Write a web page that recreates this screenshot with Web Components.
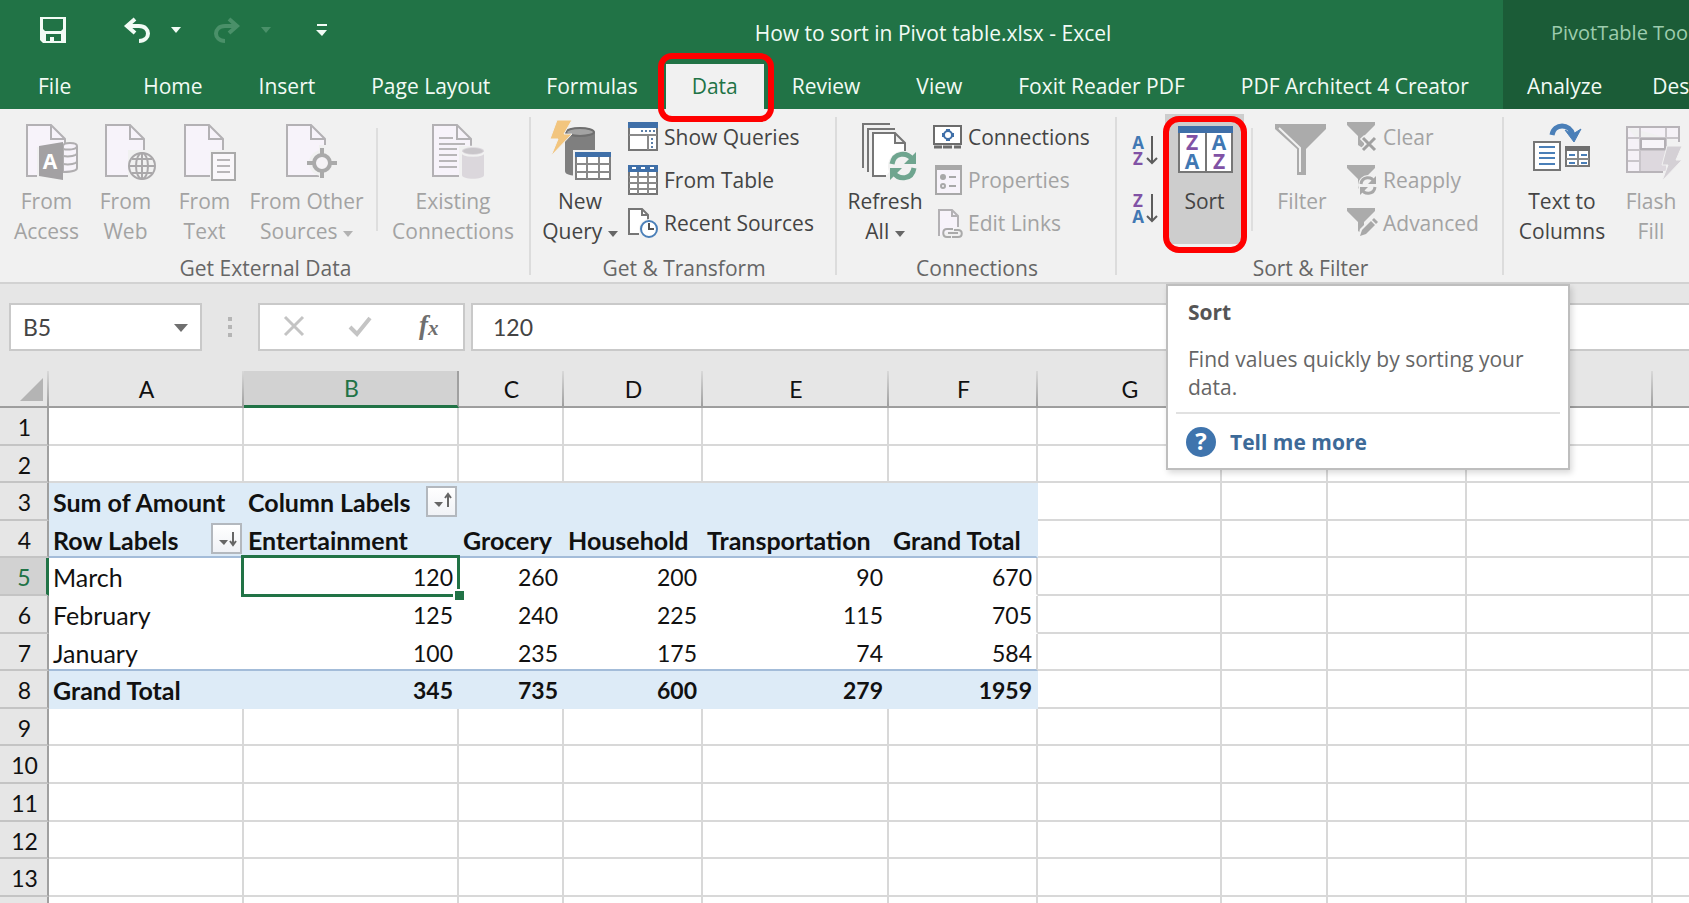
<!doctype html>
<html lang="en">
<head>
    <title>How to sort in Pivot table.xlsx - Excel</title>
    <meta charset="utf-8">
    <style>
        html, body {
            height: 100%;
            margin: 0;
            overflow: hidden;
        }
        body {
            --ui: "Open Sans", "Noto Sans", sans-serif;
            --cell: Lato, "Open Sans", sans-serif;
            --green: #217346;
            font: 21px/30px var(--ui);
            color: #444;
            background: #fff;
        }
    </style>
</head>
<body>
    <template id="header-tpl">
        <style>
            :host {
                display: grid;
                grid-template-columns: minmax(0, 1fr) 186px;
                color: #f2fbf5;
                background: var(--green);
            }
            .bar {
                display: flex;
                align-items: center;
                box-sizing: border-box;
                height: 64px;
                padding-top: 2px;
            }
            .title {
                flex: 1;
                text-align: center;
            }
            .tabs {
                display: flex;
                height: 45px;
                padding-left: 10px;
            }
            .context {
                overflow: hidden;
                white-space: nowrap;
                background: #1b5c37;
            }
            .context .bar {
                padding-left: 48px;
                font-size: 20px;
                color: #9dccae;
            }
            .context .tabs {
                padding-left: 0;
            }
        </style>
        <div>
            <div class="bar">
                <slot name="tools"></slot>
                <div class="title"><slot name="title"></slot></div>
            </div>
            <nav class="tabs"><slot></slot></nav>
        </div>
        <div class="context">
            <div class="bar"><slot name="context-title"></slot></div>
            <nav class="tabs"><slot name="context-tab"></slot></nav>
        </div>
    </template>

    <template id="quick-tpl">
        <style>
            :host {
                display: flex;
                align-items: center;
                align-self: flex-start;
                gap: 32px;
                box-sizing: border-box;
                width: 363px;
                height: 56px;
                padding-left: 39px;
            }
            button {
                display: flex;
                align-items: center;
                gap: 20px;
                padding: 0;
                border: 0;
                background: none;
                color: inherit;
            }
            button:disabled {
                color: #4a9069;
            }
            .save {
                margin-right: 24px;
            }
            .more {
                margin-left: 13px;
            }
        </style>
        <button class="save" aria-label="Save"><x-icon name="save"></x-icon></button>
        <button aria-label="Undo"><x-icon name="undo"></x-icon><x-icon name="caret"></x-icon></button>
        <button aria-label="Redo" disabled><x-icon name="redo"></x-icon><x-icon name="caret"></x-icon></button>
        <button class="more" aria-label="Customize toolbar"><x-icon name="more"></x-icon></button>
    </template>

    <template id="tab-tpl">
        <style>
            :host {
                position: relative;
                display: block;
            }
            a {
                display: block;
                padding: 0 28px;
                line-height: 45px;
                height: 45px;
                white-space: nowrap;
                color: inherit;
                text-decoration: none;
            }
            :host([first]) a {
                padding-right: 44px;
            }
            :host([slot]) a {
                padding: 0 26px 0 24px;
            }
            :host([active]) a {
                padding: 0 26px;
                color: var(--green);
                background: #f1f1f1;
            }
            .mark {
                display: none;
                position: absolute;
                z-index: 2;
                inset: -11px -10px -13px -8px;
                border: 6px solid #f00;
                border-radius: 14px;
                pointer-events: none;
            }
            :host([active]) .mark {
                display: block;
            }
        </style>
        <a href="#"><slot></slot></a>
        <span class="mark"></span>
    </template>

    <template id="ribbon-tpl">
        <style>
            :host {
                display: flex;
                height: 173px;
                background: #f1f1f1;
                border-bottom: 2px solid #d2d2d2;
            }
        </style>
        <slot></slot>
    </template>

    <template id="group-tpl">
        <style>
            :host {
                position: relative;
                flex: none;
                display: flex;
                flex-direction: column;
                box-sizing: border-box;
                padding: 0 7px;
            }
            :host::after {
                content: "";
                position: absolute;
                top: 8px;
                right: 0;
                bottom: 7px;
                width: 2px;
                background: #dcdcdc;
            }
            :host([last]) {
                flex: 1;
            }
            :host([last])::after {
                display: none;
            }
            .tools {
                display: flex;
                height: 146px;
            }
            .label {
                line-height: 26px;
                text-align: center;
                color: #666;
            }
        </style>
        <div class="tools"><slot></slot></div>
        <div class="label"><slot name="label"></slot></div>
    </template>

    <template id="big-tpl">
        <style>
            :host {
                position: relative;
                display: block;
                flex: none;
                padding-top: 5px;
            }
            button {
                display: flex;
                flex-direction: column;
                align-items: center;
                gap: 4px;
                width: 100%;
                height: 130px;
                padding: 8px 0 0;
                border: 0;
                background: none;
                font: inherit;
                color: #444;
                white-space: nowrap;
            }
            button:disabled {
                color: #a3a3a3;
            }
            :host([pressed]) button {
                background: #cdcdcd;
            }
            .mark {
                display: none;
                position: absolute;
                z-index: 2;
                inset: 7px -3px 2px -2px;
                border: 6px solid #f00;
                border-radius: 16px;
                pointer-events: none;
            }
            :host([pressed]) .mark {
                display: block;
            }
        </style>
        <button><x-icon></x-icon><span><slot></slot></span></button>
        <span class="mark"></span>
        <slot name="tip"></slot>
    </template>

    <template id="small-tpl">
        <style>
            :host {
                display: block;
            }
            button {
                display: flex;
                align-items: center;
                gap: 6px;
                height: 43px;
                padding: 0;
                border: 0;
                background: none;
                font: inherit;
                color: #444;
                white-space: nowrap;
            }
            button:disabled {
                color: #a3a3a3;
            }
            :host([label]) button {
                gap: 0;
            }
        </style>
        <button><x-icon></x-icon><span><slot></slot></span></button>
    </template>

    <template id="stack-tpl">
        <style>
            :host {
                display: flex;
                flex-direction: column;
                padding-top: 6px;
            }
            :host([narrow]) {
                align-items: center;
                width: 41px;
                gap: 15px;
                padding-top: 20px;
            }
        </style>
        <slot></slot>
    </template>

    <template id="divider-tpl">
        <style>
            :host {
                display: block;
                flex: none;
                width: 2px;
                height: 103px;
                margin: 19px 7px 0;
                background: #dedede;
            }
        </style>
    </template>

    <template id="tip-tpl">
        <style>
            :host {
                position: absolute;
                z-index: 3;
                top: 175px;
                left: 1px;
                box-sizing: border-box;
                width: 404px;
                padding: 12px 8px 11px;
                background: #fff;
                border: 2px solid #bebebe;
                box-shadow: 2px 3px 6px rgba(0, 0, 0, 0.15);
                line-height: 28px;
                color: #666;
            }
            h2, p {
                margin: 0 12px;
                font-size: inherit;
            }
            h2 {
                margin-bottom: 19px;
                color: #555;
            }
            a {
                display: flex;
                align-items: center;
                gap: 14px;
                margin-top: 11px;
                padding: 13px 10px 0;
                border-top: 2px solid #e1e1e1;
                font-weight: bold;
                color: #3d6a98;
                text-decoration: none;
            }
        </style>
        <h2><slot name="heading"></slot></h2>
        <p><slot></slot></p>
        <a href="#"><x-icon name="help"></x-icon><slot name="link"></slot></a>
    </template>

    <template id="formula-tpl">
        <style>
            :host {
                display: flex;
                height: 48px;
                padding: 19px 0 20px 9px;
                background: #e6e6e6;
                color: #444;
            }
            .box {
                display: flex;
                align-items: center;
                box-sizing: border-box;
                height: 48px;
                border: 2px solid #c9c9c9;
                background: #fff;
            }
            .name {
                width: 193px;
                padding-right: 12px;
            }
            .grip {
                display: flex;
                align-items: center;
                justify-content: center;
                width: 56px;
            }
            .keys {
                width: 207px;
                justify-content: space-around;
                padding: 0 3px 0 1px;
            }
            .value {
                flex: 1;
                margin-left: 6px;
                border-right: 0;
            }
            input {
                flex: 1;
                min-width: 0;
                padding: 0 12px;
                border: 0;
                outline: 0;
                background: none;
                font: 23px var(--cell);
                color: inherit;
            }
            .value input {
                padding: 0 20px;
            }
            button {
                padding: 0;
                border: 0;
                background: none;
                color: #6f6f6f;
            }
            button:disabled {
                color: #c4c4c4;
            }
        </style>
        <div class="box name">
            <input type="text" aria-label="Name box" value="B5">
            <button aria-label="Open name list"><x-icon name="drop"></x-icon></button>
        </div>
        <div class="grip"><x-icon name="grip"></x-icon></div>
        <div class="box keys">
            <button aria-label="Cancel" disabled><x-icon name="cancel"></x-icon></button>
            <button aria-label="Enter" disabled><x-icon name="enter"></x-icon></button>
            <button aria-label="Insert function"><x-icon name="fx"></x-icon></button>
        </div>
        <div class="box value">
            <input type="text" aria-label="Formula bar" value="120">
        </div>
    </template>

    <template id="sheet-tpl">
        <style>
            :host {
                display: block;
                font: 23px/30px var(--cell);
                color: #111;
            }
            table {
                width: 100%;
                table-layout: fixed;
                border-spacing: 0;
            }
            tr {
                height: 38px;
            }
            tbody tr:nth-child(5n + 2), tbody tr:nth-child(5n + 4), thead tr {
                height: 37px;
            }
            th, td {
                box-sizing: border-box;
                height: inherit;
                padding: 2px 4px 0;
                border: 0 solid #d8d8d8;
                border-width: 0 2px 2px 0;
                font-weight: normal;
                white-space: nowrap;
            }
            td {
                font-size: 25px;
            }
            thead th {
                padding: 0 0 0 2px;
                background: #e6e6e6;
                border-color: #a0a0a0;
                border-image: linear-gradient(#dcdcdc, #9c9c9c) 2;
            }
            tbody th {
                padding: 2px 0 0 2px;
                background: #e6e6e6;
                border-color: #c4c4c4;
                border-right-color: #a0a0a0;
            }
            thead th.on {
                color: var(--green);
                background: #d2d2d2;
                border-image: none;
                border-bottom: 3px solid var(--green);
                border-right-color: #a0a0a0;
            }
            tbody th.on {
                color: var(--green);
                background: #d2d2d2;
                border-right: 3px solid var(--green);
            }
            tr > :last-child {
                border-right: 0;
            }
            thead th.corner {
                padding: 0 4px 0 0;
                line-height: 0;
                text-align: right;
                vertical-align: middle;
            }
            .num {
                font-size: 23px;
                text-align: right;
            }
            .bold {
                font-weight: bold;
            }
            .plain, .band {
                padding-right: 6px;
                border-right: 0;
                border-bottom-color: #fff;
            }
            .band {
                background: #ddebf7;
                border-color: #ddebf7;
            }
            .edge {
                padding-right: 4px;
                border-right: 2px solid #d8d8d8;
            }
            .band.edge {
                border-right-color: #ddebf7;
            }
            .line {
                border-bottom-color: #a3bcd9;
            }
            .box {
                display: flex;
                align-items: center;
                justify-content: space-between;
            }
            .box button {
                flex: none;
                width: 31px;
                height: 31px;
                margin: -2px -4px 0 0;
                padding: 0;
                border: 2px solid #b3b8be;
                background: linear-gradient(#fff, #f0f2f6);
                line-height: 0;
            }
            .picked {
                position: relative;
            }
            .picked::before {
                content: "";
                position: absolute;
                inset: -3px -1px -3px -3px;
                border: 3px solid var(--green);
            }
            .picked::after {
                content: "";
                position: absolute;
                right: -5px;
                bottom: -6px;
                width: 9px;
                height: 9px;
                border: 2px solid #fff;
                border-width: 2px 0 0 2px;
                background: var(--green);
            }
        </style>
        <table>
            <colgroup></colgroup>
            <thead></thead>
            <tbody></tbody>
        </table>
    </template>

    <excel-header>
        <quick-access slot="tools"></quick-access>
        <span slot="title">How to sort in Pivot table.xlsx - Excel</span>
        <ribbon-tab first>File</ribbon-tab>
        <ribbon-tab>Home</ribbon-tab>
        <ribbon-tab>Insert</ribbon-tab>
        <ribbon-tab>Page Layout</ribbon-tab>
        <ribbon-tab>Formulas</ribbon-tab>
        <ribbon-tab active>Data</ribbon-tab>
        <ribbon-tab>Review</ribbon-tab>
        <ribbon-tab>View</ribbon-tab>
        <ribbon-tab>Foxit Reader PDF</ribbon-tab>
        <ribbon-tab>PDF Architect 4 Creator</ribbon-tab>
        <span slot="context-title">PivotTable Tools</span>
        <ribbon-tab slot="context-tab">Analyze</ribbon-tab>
        <ribbon-tab slot="context-tab">Design</ribbon-tab>
    </excel-header>

    <excel-ribbon>
        <ribbon-group style="width: 531px">
            <big-button icon="access" style="width: 79px" disabled>From<br>Access</big-button>
            <big-button icon="web" style="width: 79px" disabled>From<br>Web</big-button>
            <big-button icon="text" style="width: 79px" disabled>From<br>Text</big-button>
            <big-button icon="other" style="width: 125px" disabled>From Other<br>Sources <x-icon name="arrow"></x-icon></big-button>
            <tool-divider></tool-divider>
            <big-button icon="existing" style="width: 136px" disabled>Existing<br>Connections</big-button>
            <span slot="label">Get External Data</span>
        </ribbon-group>
        <ribbon-group style="width: 306px">
            <big-button icon="query" style="width: 84px">New<br>Query <x-icon name="arrow"></x-icon></big-button>
            <tool-stack style="margin-left: 6px">
                <small-button icon="show">Show Queries</small-button>
                <small-button icon="table">From Table</small-button>
                <small-button icon="recent">Recent Sources</small-button>
            </tool-stack>
            <span slot="label">Get &amp; Transform</span>
        </ribbon-group>
        <ribbon-group style="width: 280px">
            <big-button icon="refresh" style="width: 82px">Refresh<br>All <x-icon name="arrow"></x-icon></big-button>
            <tool-stack style="margin-left: 6px">
                <small-button icon="links">Connections</small-button>
                <small-button icon="props" disabled>Properties</small-button>
                <small-button icon="edit" disabled>Edit Links</small-button>
            </tool-stack>
            <span slot="label">Connections</span>
        </ribbon-group>
        <ribbon-group style="width: 387px">
            <tool-stack narrow>
                <small-button icon="az" label="Sort A to Z"></small-button>
                <small-button icon="za" label="Sort Z to A"></small-button>
            </tool-stack>
            <big-button icon="sort" style="width: 79px" pressed>Sort
                <sort-tip slot="tip">
                    <span slot="heading">Sort</span>
                    Find values quickly by sorting your data.
                    <span slot="link">Tell me more</span>
                </sort-tip>
            </big-button>
            <tool-divider></tool-divider>
            <big-button icon="filter" style="width: 84px" disabled>Filter</big-button>
            <tool-stack style="margin-left: 3px">
                <small-button icon="clear" disabled>Clear</small-button>
                <small-button icon="reapply" disabled>Reapply</small-button>
                <small-button icon="advanced" disabled>Advanced</small-button>
            </tool-stack>
            <span slot="label">Sort &amp; Filter</span>
        </ribbon-group>
        <ribbon-group last>
            <big-button icon="columns" style="width: 102px">Text to<br>Columns</big-button>
            <big-button icon="flash" style="width: 76px" disabled>Flash<br>Fill</big-button>
        </ribbon-group>
    </excel-ribbon>

    <formula-bar></formula-bar>
    <pivot-sheet></pivot-sheet>

<script>
    // page outline with a folded corner, shared by the document icons
    const page = (end, side) => `
        <path d="M${end} 54H10V3h24l14 14v${side}H${end}z" fill="#f7f3fa"/>
        <path d="M${end} 54H10V3h24l14 14v${side}M34 3v14h14" fill="none" stroke="#b3b1b4" stroke-width="2"/>`;

    const funnel = '<path d="M0 0h28v3L17 14v13l-6-4V14L0 3z" fill="#ababab"/>';

    const letters = 'font-family="Open Sans, sans-serif" font-weight="bold"';

    // name: [width, height, markup]
    const icons = {
        save: [28, 28, '<path d="M1 1h26v26H4l-3-3zM4 3v10l2 2h16l2-2V3zM7 18v7h4v-4h4v4h7v-7z" fill="currentColor" fill-rule="evenodd"/>'],
        undo: [28, 26, '<path d="M12 2L4 9l8 7M4 9h12c12 0 12 15 0 15" fill="none" stroke="currentColor" stroke-width="4"/>'],
        redo: [28, 26, '<path d="M16 2l8 7-8 7M24 9H12C0 9 0 24 12 24" fill="none" stroke="currentColor" stroke-width="4"/>'],
        caret: [10, 6, '<path d="M0 0h10L5 6z" fill="currentColor"/>'],
        more: [11, 14, '<path d="M1 1h10v2H1zM0 7h11l-5 6z" fill="currentColor"/>'],
        arrow: [10, 10, '<path d="M0 2h10L5 8z" fill="currentColor" opacity="0.8"/>'],
        drop: [14, 8, '<path d="M0 0h14L7 8z" fill="currentColor"/>'],
        grip: [4, 20, '<path d="M0 0h4v4H0zM0 8h4v4H0zM0 16h4v4H0z" fill="#b5b5b5"/>'],
        cancel: [22, 20, '<path d="M2 1l18 18M20 1L2 19" stroke="currentColor" stroke-width="3" fill="none"/>'],
        enter: [24, 20, '<path d="M2 11l7 7L22 2" stroke="currentColor" stroke-width="4" fill="none"/>'],
        fx: [24, 28, '<text x="4" y="22" font-family="Liberation Serif, serif" font-style="italic" font-weight="bold" font-size="27" fill="currentColor">f</text><text x="13" y="23" font-family="Liberation Serif, serif" font-style="italic" font-weight="bold" font-size="21" fill="currentColor">x</text>'],
        help: [30, 30, `<circle cx="15" cy="15" r="15" fill="#3f74ad"/><text x="15" y="23" text-anchor="middle" ${letters} font-size="24" fill="#fff">?</text>`],
        access: [60, 60, page(20, 8) + `
            <path d="M46 24c0-4 14-4 14 0v22c0 4-14 4-14 4z" fill="#f7f3fa" stroke="#b0aeb0" stroke-width="2"/>
            <path d="M46 27c4 1 14 1 14-3M46 34c6 1 14 0 14-3M46 42c6 1 14 0 14-3" fill="none" stroke="#b0aeb0" stroke-width="2"/>
            <path d="M22 24l24-4v38l-24-4z" fill="#a3a1a3"/>
            <text x="33" y="47" text-anchor="middle" ${letters} font-size="21" fill="#fff">A</text>`],
        web: [60, 60, page(32, 11) + `
            <g fill="none" stroke="#aaa8aa" stroke-width="2"><circle cx="46" cy="44" r="13" fill="#f1f1f1"/><ellipse cx="46" cy="44" rx="6" ry="13"/><path d="M46 31v26M33 44h26M36 37h20M36 51h20"/></g>`],
        text: [60, 60, page(35, 11) + `
            <path d="M37 31h23v27H37z" fill="#f9f7fa" stroke="#aaa" stroke-width="2"/><path d="M42 38h13M42 44h13M42 50h13" stroke="#b8b6b8" stroke-width="2"/>`],
        other: [60, 60, page(42, 6) + `
            <circle cx="45" cy="41" r="13" fill="#f1f1f1"/><path d="M45 26v30M30 41h30" stroke="#aaa" stroke-width="4"/>
            <circle cx="45" cy="41" r="8" fill="#f5f3f6" stroke="#aaa" stroke-width="4"/>`],
        existing: [60, 60, page(36, 7) + `
            <path d="M16 16h14M16 22h26M16 27h18M16 33h18M16 39h18M16 45h18" stroke="#b8b6b8" stroke-width="2"/>
            <path d="M37 29c0-7 24-7 24 0v24c0 7-24 7-24 0z" fill="#f1f1f1"/>
            <path d="M39 29c0-5 22-5 22 0v24c0 5-22 5-22 0z" fill="#dbd7dc"/><ellipse cx="50" cy="29" rx="10" ry="3" fill="#c9c6ca"/>
            <path d="M39 30c0 5 22 5 22 0" fill="none" stroke="#f1f1f1" stroke-width="2"/>`],
        query: [60, 60, `
            <path d="M15 11c0-7 30-7 30 0v17H25v26c-6-1-10-2-10-5z" fill="#7f7f7f"/>
            <ellipse cx="30" cy="10" rx="14" ry="4" fill="#a3a3a3" stroke="#6f6f6f" stroke-width="2"/>
            <path d="M7-2h15l-8 14h8L1 34l7-17H0z" fill="#f2c57e" stroke="#f1f1f1" stroke-width="1"/>
            <path d="M23 28h38v32H23z" fill="#f1f1f1"/><path d="M26 31h34v26H26z" fill="#fff" stroke="#7f7f7f" stroke-width="2"/>
            <path d="M25 30h36v5H25z" fill="#3f6fa8"/><path d="M37 35v22M49 35v22M26 42h34M26 50h34" stroke="#8a8a8a" stroke-width="2"/>`],
        show: [30, 30, `
            <path d="M1 2h28v26H1z" fill="#fff" stroke="#767676" stroke-width="2"/><path d="M0 0h30v6H0z" fill="#3f6fa8"/>
            <path d="M1 13h28M20 13v15" stroke="#8a8a8a" stroke-width="2"/><path d="M13 9h14M23 17h4M23 21h4M23 25h4" stroke="#5c7fa8" stroke-width="2" stroke-dasharray="2 2"/>`],
        table: [30, 30, `
            <path d="M1 1h28v28H1z" fill="#fff" stroke="#767676" stroke-width="2"/><path d="M0 0h30v7H0z" fill="#3f6fa8"/>
            <path d="M4 2h4v2H4zM13 2h4v2h-4zM22 2h4v2h-4z" fill="#fff"/><path d="M10 7v22M20 7v22M1 12h28M1 18h28M1 24h28" stroke="#8a8a8a" stroke-width="2"/>`],
        recent: [30, 30, `
            <path d="M11 26H1V1h13l6 6v7" fill="#fff" stroke="#767676" stroke-width="2"/><path d="M14 1v6h6" fill="none" stroke="#767676" stroke-width="2"/>
            <circle cx="21" cy="21" r="10" fill="#f1f1f1"/><circle cx="21" cy="21" r="8" fill="#fff" stroke="#4a7fb8" stroke-width="2"/><path d="M21 15v6h5" fill="none" stroke="#555" stroke-width="2"/>`],
        refresh: [60, 60, `
            <path d="M8 46V2h27M13 50V7h27" fill="none" stroke="#767676" stroke-width="2"/>
            <path d="M31 54H18V11h22l10 10v8M40 11v10h10" fill="#fff" stroke="#767676" stroke-width="2"/>
            <circle cx="48" cy="44" r="15" fill="#f1f1f1"/>
            <path d="M37 42c2-12 15-12 20-5M59 46c-2 12-15 12-20 5" fill="none" stroke="#6fa58f" stroke-width="5"/>
            <path d="M61 30v12H49zM35 58V46h12z" fill="#6fa58f"/>`],
        links: [30, 30, `
            <path d="M2 4h27v18H2z" fill="#fff" stroke="#6c6c6c" stroke-width="2"/><path d="M2 25h8M11 25h9M22 25h7" stroke="#6c6c6c" stroke-width="3"/>
            <path d="M16 7v12M10 13h12" stroke="#3f6fa8" stroke-width="4"/><circle cx="16" cy="13" r="4" fill="#fff" stroke="#3f6fa8" stroke-width="2"/>`],
        props: [30, 30, `
            <path d="M4 1h25v28H4z" fill="#f7f3fa" stroke="#a8a8a8" stroke-width="2"/><path d="M3 0h27v5H3z" fill="#a8a8a8"/>
            <circle cx="11" cy="12" r="3" fill="#a8a8a8"/><circle cx="11" cy="21" r="2" fill="none" stroke="#a8a8a8" stroke-width="2"/><path d="M17 12h7M17 21h7" stroke="#a8a8a8" stroke-width="2"/>`],
        edit: [30, 30, `
            <path d="M7 28V2h13l6 6v11" fill="#f7f3fa" stroke="#b3b1b4" stroke-width="2"/><path d="M20 2v6h6" fill="none" stroke="#b3b1b4" stroke-width="2"/>
            <path d="M21 21h-6c-5 0-5 8 0 8h4M20 29h6c5 0 5-7 0-7h-4M16 25h10" fill="none" stroke="#aaa" stroke-width="2"/>`],
        az: [26, 30, `<text x="6" y="13" text-anchor="middle" ${letters} font-size="17" fill="#4178b3">A</text><text x="6" y="29" text-anchor="middle" ${letters} font-size="17" fill="#8152a5">Z</text><path d="M20 0v27M15 22l5 5 5-5" fill="none" stroke="#5c5c5c" stroke-width="2"/>`],
        za: [26, 30, `<text x="6" y="13" text-anchor="middle" ${letters} font-size="17" fill="#8152a5">Z</text><text x="6" y="29" text-anchor="middle" ${letters} font-size="17" fill="#4178b3">A</text><path d="M20 0v27M15 22l5 5 5-5" fill="none" stroke="#5c5c5c" stroke-width="2"/>`],
        sort: [60, 60, `
            <path d="M4 5h53v45H4z" fill="#fff" stroke="#767676" stroke-width="2"/><path d="M3 4h55v7H3z" fill="#3f6fa8"/><path d="M31 11v39" stroke="#767676" stroke-width="2"/>
            <g text-anchor="middle" ${letters} font-size="21"><text x="17" y="28" fill="#8152a5">Z</text><text x="17" y="47" fill="#4178b3">A</text><text x="44" y="28" fill="#4178b3">A</text><text x="44" y="47" fill="#8152a5">Z</text></g>`],
        filter: [60, 60, '<path d="M3 2h51v5L34 27v26h-9V27L3 7z" fill="#ababab"/><path d="M7 6l21 20v24" fill="none" stroke="#f1f1f1" stroke-width="2"/>'],
        clear: [30, 30, funnel + '<path d="M15 15l14 14M29 15L15 29" stroke="#f1f1f1" stroke-width="6"/><path d="M16 16l12 12M28 16L16 28" stroke="#a0a0a0" stroke-width="3"/>'],
        reapply: [30, 30, funnel + '<circle cx="21" cy="20" r="10" fill="#f1f1f1"/><path d="M14 19c1-8 11-8 13-2M28 22c-1 8-11 8-13 2" fill="none" stroke="#a8a8a8" stroke-width="3"/><path d="M29 11v8h-8zM13 30v-8h8z" fill="#a8a8a8"/>'],
        advanced: [30, 30, funnel + '<path d="M11 30l2-9L25 9l7 7-12 12z" fill="#f1f1f1"/><path d="M13 28l2-6 9-9 4 4-9 9z" fill="#a8a8a8"/><path d="M25 12l2-2 4 4-2 2z" fill="#a8a8a8"/>'],
        columns: [60, 60, `
            <path d="M2 20h26v28H2z" fill="#fff" stroke="#767676" stroke-width="2"/><path d="M7 25h16M7 31h16M7 36h16M7 42h16" stroke="#4a7fb8" stroke-width="2"/>
            <path d="M34 26h23v18H34z" fill="#fff" stroke="#767676" stroke-width="2"/><path d="M33 24h25v5H33z" fill="#6f6f6f"/>
            <path d="M46 29v15M34 37h23" stroke="#8a8a8a" stroke-width="2"/><path d="M37 33h6M49 33h6M37 41h6M49 41h6" stroke="#4a7fb8" stroke-width="2"/>
            <path d="M20 13C22 1 38 1 41 13" fill="none" stroke="#4a7fb8" stroke-width="5"/><path d="M33 8l8 4 8-5-7 13z" fill="#4a7fb8" stroke="#4a7fb8"/>`],
        flash: [60, 60, `
            <path d="M6 5h52v14M6 5v45h36" fill="#f5f1f7"/>
            <path d="M6 16h52M6 28h44M6 39h36M19 5v45M45 5v30" stroke="#c9c5ca" stroke-width="2"/>
            <path d="M20 29h25v20H20z" fill="#ddd8de"/><path d="M20 17h24v10H20z" fill="#f7f4f8" stroke="#b3afb4" stroke-width="2"/>
            <path d="M58 20V5H6v45h36" fill="none" stroke="#b8b4b9" stroke-width="2"/>
            <path d="M46 24h15l-6 14h6L41 59l6-16h-6z" fill="#d4d0d5" stroke="#f1f1f1" stroke-width="1"/>`],
        corner: [24, 24, '<path d="M24 1v23H1z" fill="#b4b4b4"/>'],
        down: [26, 26, '<path d="M5 14h9l-4 5zM4 13h11" fill="#666"/><path d="M19 6v13M16 15l3 4 3-4" fill="none" stroke="#666" stroke-width="2"/>'],
        up: [26, 26, '<path d="M5 14h9l-4 5z" fill="#666"/><path d="M19 19V6M16 10l3-4 3 4" fill="none" stroke="#666" stroke-width="2"/>']
    };

    class Part extends HTMLElement {
        constructor() {
            super();
            this.attachShadow({ mode: 'open' });
            const id = this.constructor.tpl;
            if (id) {
                this.shadowRoot.appendChild(document.querySelector(id).content.cloneNode(true));
            }
        }
    }

    // registers an element that only needs its template
    function define(name, tpl) {
        customElements.define(name, class extends Part {
            static tpl = tpl;
        });
    }

    customElements.define('x-icon', class extends Part {
        static get observedAttributes() {
            return ['name'];
        }

        attributeChangedCallback() {
            const [w, h, shapes] = icons[this.getAttribute('name')];
            this.shadowRoot.innerHTML = `
                <style>
                    :host { display: inline-block; flex: none; line-height: 0; }
                    svg { display: block; overflow: visible; }
                </style>
                <svg width="${w}" height="${h}" viewBox="0 0 ${w} ${h}" aria-hidden="true">${shapes}</svg>`;
        }
    });

    class RibbonButton extends Part {
        connectedCallback() {
            const button = this.shadowRoot.querySelector('button');
            button.disabled = this.hasAttribute('disabled');
            if (this.hasAttribute('label')) {
                button.setAttribute('aria-label', this.getAttribute('label'));
            }
            this.shadowRoot.querySelector('x-icon').setAttribute('name', this.getAttribute('icon'));
        }
    }

    customElements.define('big-button', class extends RibbonButton {
        static tpl = '#big-tpl';
    });

    customElements.define('small-button', class extends RibbonButton {
        static tpl = '#small-tpl';
    });

    const columns = [
        ['A', 195], ['B', 215], ['C', 105], ['D', 139], ['E', 186], ['F', 149],
        ['G', 184], ['', 106], ['', 139], ['', 186], ['', 0]
    ];

    const pivot = {
        3: ['Sum of Amount', 'Column Labels', '', '', '', ''],
        4: ['Row Labels', 'Entertainment', 'Grocery', 'Household', 'Transportation', 'Grand Total'],
        5: ['March', 120, 260, 200, 90, 670],
        6: ['February', 125, 240, 225, 115, 705],
        7: ['January', 100, 235, 175, 74, 584],
        8: ['Grand Total', 345, 735, 600, 279, 1959]
    };

    // cells with a sort button in them
    const sorted = { 'Column Labels': 'up', 'Row Labels': 'down' };

    customElements.define('pivot-sheet', class extends Part {
        static tpl = '#sheet-tpl';

        connectedCallback() {
            const $ = s => this.shadowRoot.querySelector(s);

            $('colgroup').innerHTML = '<col style="width: 49px">' +
                columns.map(([, w]) => w ? `<col style="width: ${w}px">` : '<col>').join('');
            $('thead').innerHTML = '<tr><th class="corner"><x-icon name="corner"></x-icon></th>' +
                columns.map(([name]) => `<th${name === 'B' ? ' class="on"' : ''}>${name}</th>`).join('') + '</tr>';

            let rows = '';
            for (let r = 1; r <= 14; r++) {
                rows += `<tr><th${r === 5 ? ' class="on"' : ''}>${r < 14 ? r : ''}</th>`;
                rows += columns.map((col, c) => this.cell(r, c)).join('') + '</tr>';
            }
            $('tbody').innerHTML = rows;
        }

        cell(r, c) {
            const value = pivot[r] && pivot[r][c];
            if (value === undefined) {
                return '<td></td>';
            }
            const band = r < 5 || r === 8;
            const css = [band ? 'band bold' : 'plain'];
            if (typeof value === 'number') css.push('num');
            if (r === 4 || r === 7) css.push('line');
            if (c === 5) css.push('edge');
            if (r === 5 && c === 1) css.push('picked');
            const body = sorted[value]
                ? `<div class="box">${value}<button aria-label="Sort ${value}"><x-icon name="${sorted[value]}"></x-icon></button></div>`
                : value;
            return `<td class="${css.join(' ')}">${body}</td>`;
        }
    });

    define('excel-header', '#header-tpl');
    define('quick-access', '#quick-tpl');
    define('ribbon-tab', '#tab-tpl');
    define('excel-ribbon', '#ribbon-tpl');
    define('ribbon-group', '#group-tpl');
    define('tool-stack', '#stack-tpl');
    define('tool-divider', '#divider-tpl');
    define('sort-tip', '#tip-tpl');
    define('formula-bar', '#formula-tpl');
</script>
</body>
</html>
